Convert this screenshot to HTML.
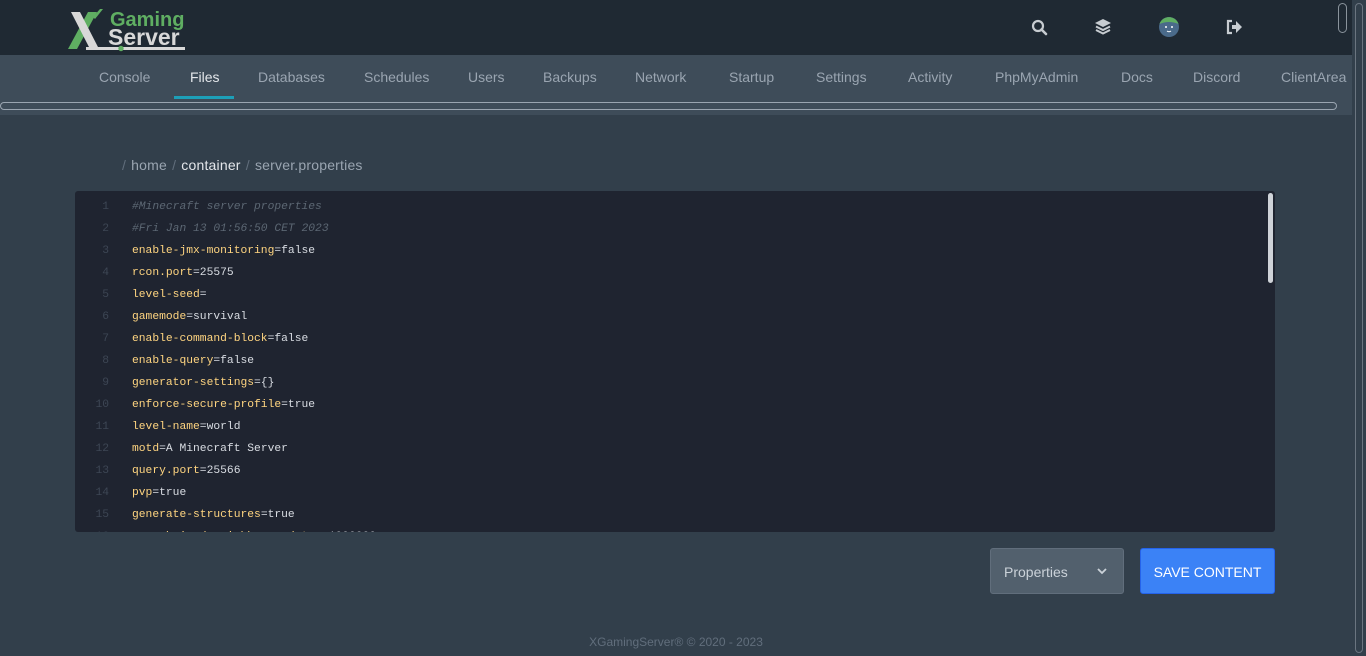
<!DOCTYPE html><html><head><style>
*{box-sizing:border-box;margin:0;padding:0}
body{width:1366px;height:656px;overflow:hidden;background:#323f4b;font-family:"Liberation Sans",sans-serif;position:relative}
.hdr{position:absolute;left:0;top:0;width:1352px;height:55px;background:#1f2933}
.nav{position:absolute;left:0;top:55px;width:1352px;height:60px;background:#3e4c59}
.nav a{position:absolute;top:14px;font-size:14px;color:#9aa5b1}
.ed{position:absolute;left:75px;top:191px;width:1200px;height:341px;background:#1f2430;border-radius:3px;overflow:hidden;font-family:"Liberation Mono",monospace;font-size:11.3px}
.ln{position:absolute;left:0;width:34px;text-align:right;color:#3d4654}
.cd{position:absolute;left:57px;color:#d9dde3;white-space:pre}
.k{color:#ffd580}.c{color:#5c6773;font-style:italic}
</style></head><body>
<div class="hdr">
<svg style="position:absolute;left:66px;top:4px" width="124" height="48" viewBox="0 0 124 48">
<path d="M2 45 L22 8 L31 8 L11 45Z" fill="#5fae62"/><path d="M5 8 L14 8 L33 45 L24 45Z" fill="#d8d8d8"/><path d="M27 13 L34 5 L37 5 L29 15Z" fill="#5fae62"/>
<text x="44" y="22" font-family="Liberation Sans" font-weight="bold" font-size="20" fill="#5fae62">Gaming</text>
<text x="42" y="41" font-family="Liberation Sans" font-weight="bold" font-size="23" fill="#d8d8d8">Server</text>
<rect x="20" y="43" width="99" height="3" fill="#d8d8d8"/><circle cx="55" cy="44.5" r="2.7" fill="#5fae62"/>
</svg>
<svg style="position:absolute;left:1031px;top:19px" width="17" height="17" viewBox="0 0 17 17"><circle cx="7" cy="7" r="5" stroke="#c7ccd1" stroke-width="2.2" fill="none"/><path d="M10.5 10.5L15 15" stroke="#c7ccd1" stroke-width="2.6" stroke-linecap="round"/></svg>
<svg style="position:absolute;left:1094px;top:18px" width="18" height="18" viewBox="0 0 18 18"><path d="M9 1L17 5 9 9 1 5Z" fill="#c7ccd1"/><path d="M2 8.5L9 12 16 8.5M2 12L9 15.5 16 12" stroke="#c7ccd1" stroke-width="2" fill="none"/></svg>
<svg style="position:absolute;left:1158px;top:16px" width="22" height="22" viewBox="0 0 22 22"><circle cx="11" cy="11" r="10" fill="#4a6a8a"/><path d="M1.5 8A10 10 0 0 1 20.5 8 Q11 4 1.5 8Z" fill="#5fae62"/><circle cx="8" cy="11" r="1" fill="#fff"/><circle cx="14" cy="11" r="1" fill="#fff"/><path d="M9 15Q11 16.5 13 15" stroke="#fff" fill="none"/></svg>
<svg style="position:absolute;left:1226px;top:19px" width="18" height="16" viewBox="0 0 18 16"><path d="M6 2H2V14H6" stroke="#c7ccd1" stroke-width="2.2" fill="none"/><path d="M6 6H10V2L16 8 10 14V10H6Z" fill="#c7ccd1"/></svg>
</div>
<div style="position:absolute;left:1338px;top:3px;width:9px;height:30px;border:1px solid #8a939c;border-radius:5px"></div>
<div style="position:absolute;left:1352px;top:0;width:14px;height:656px;background:#323f4b"></div>
<div style="position:absolute;left:1355px;top:3px;width:8px;height:650px;border:1px solid #6b7580;border-radius:4px"></div>
<div class="nav">
<a style="left:99px">Console</a><a style="left:190px;color:#e4e7eb">Files</a><a style="left:258px">Databases</a><a style="left:364px">Schedules</a><a style="left:468px">Users</a><a style="left:543px">Backups</a><a style="left:635px">Network</a><a style="left:729px">Startup</a><a style="left:816px">Settings</a><a style="left:908px">Activity</a><a style="left:995px">PhpMyAdmin</a><a style="left:1121px">Docs</a><a style="left:1193px">Discord</a><a style="left:1281px">ClientArea</a>
<div style="position:absolute;left:174px;top:41px;width:60px;height:3px;background:#1d9fb8"></div>
<div style="position:absolute;left:0;top:47px;width:1337px;height:8px;border:1px solid #9aa5b1;border-radius:4px"></div>
</div>
<div style="position:absolute;left:122px;top:157px;font-size:14px;color:#9aa5b1;word-spacing:1px;letter-spacing:0.2px"><span style="color:#616e7c">/</span> home <span style="color:#616e7c">/</span> <span style="color:#e4e7eb">container</span> <span style="color:#616e7c">/</span> server.properties</div>
<div class="ed">
<div style="position:absolute;right:2px;top:2px;width:5px;height:90px;background:#cfd3d8;border-radius:3px"></div>
<div id="e"></div>
</div>
<div style="position:absolute;left:990px;top:548px;width:134px;height:46px;background:#52606d;border:1px solid #616e7c;border-radius:3px;color:#cbd2d9;font-size:14px;padding:15px 0 0 13px">Properties<svg style="position:absolute;right:16px;top:19px" width="10" height="7" viewBox="0 0 10 7"><path d="M1 1L5 5 9 1" stroke="#cbd2d9" stroke-width="1.8" fill="none"/></svg></div>
<div style="position:absolute;left:1140px;top:548px;width:135px;height:46px;background:#3b82f6;border:1px solid #2563eb;border-radius:3px;color:#fff;font-size:14px;text-align:center;padding-top:15px">SAVE CONTENT</div>
<div style="position:absolute;left:0;width:1352px;top:635px;text-align:center;font-size:12px;color:#616e7c">XGamingServer® © 2020 - 2023</div>
<script>
var L=[["#Minecraft server properties"],["#Fri Jan 13 01:56:50 CET 2023"],["enable-jmx-monitoring","false"],["rcon.port","25575"],["level-seed",""],["gamemode","survival"],["enable-command-block","false"],["enable-query","false"],["generator-settings","{}"],["enforce-secure-profile","true"],["level-name","world"],["motd","A Minecraft Server"],["query.port","25566"],["pvp","true"],["generate-structures","true"],["max-chained-neighbor-updates","1000000"]];
var h="";L.forEach(function(l,i){var t=10+i*22;h+='<div class="ln" style="top:'+t+'px">'+(i+1)+'</div><div class="cd" style="top:'+t+'px">'+(l.length==1?'<span class="c">'+l[0]+'</span>':'<span class="k">'+l[0]+'</span>='+l[1])+'</div>'});document.getElementById("e").innerHTML=h;
</script>
</body></html>
